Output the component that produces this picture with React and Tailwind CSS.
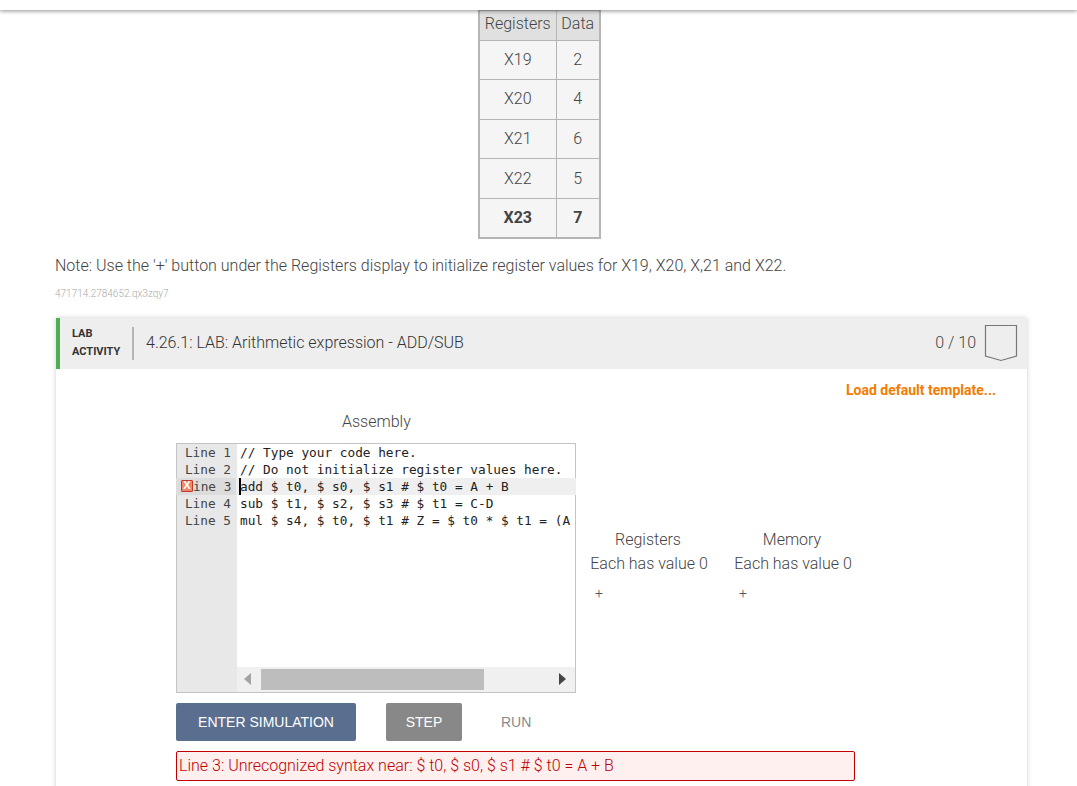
import { useState } from "react";

const registers = [
  { name: "X19", value: "2" },
  { name: "X20", value: "4" },
  { name: "X21", value: "6" },
  { name: "X22", value: "5" },
  { name: "X23", value: "7", bold: true },
];

const lines = [
  "// Type your code here.",
  "// Do not initialize register values here.",
  "add $ t0, $ s0, $ s1 # $ t0 = A + B",
  "sub $ t1, $ s2, $ s3 # $ t1 = C-D",
  "mul $ s4, $ t0, $ t1 # Z = $ t0 * $ t1 = (A",
];

function RegisterTable() {
  return (
    <table className="mx-auto border-collapse border-2 border-[#b5b5b5] text-[16px] font-light text-[#444]">
      <thead>
        <tr className="h-[30px] bg-[#e0e0e0]">
          <th className="w-[77px] border border-[#b5b5b5] pb-[2px] font-light">Registers</th>
          <th className="w-[44px] border border-[#b5b5b5] pb-[2px] font-light">Data</th>
        </tr>
      </thead>
      <tbody>
        {registers.map((r) => (
          <tr key={r.name} className="h-[39.6px] bg-[#f5f5f5]">
            <td className={`border border-[#b5b5b5] text-center ${r.bold ? "font-bold" : ""}`}>{r.name}</td>
            <td className={`border border-[#b5b5b5] text-center ${r.bold ? "font-bold" : ""}`}>{r.value}</td>
          </tr>
        ))}
      </tbody>
    </table>
  );
}

function Editor() {
  return (
    <div className="flex h-[250px] w-[400px] flex-col overflow-hidden border border-[#c4c4c4] bg-white">
      <div className="flex min-h-0 flex-1">
        <div className="w-[60px] shrink-0 bg-[#e8e8e8]" />
        <div className="min-w-0 flex-1" />
      </div>
      <div className="flex h-[25px] bg-[#f0f0f0]">
        <div className="w-[60px] shrink-0 bg-[#e8e8e8]" />
        <div className="flex flex-1 items-center">
          <span className="ml-[7px] h-0 w-0 border-y-[6px] border-r-[7px] border-y-transparent border-r-[#a3a3a3]" />
          <div className="ml-[10px] h-[21px] w-[223px] bg-[#bdbdbd]" />
          <span className="ml-[75px] h-0 w-0 border-y-[6px] border-l-[7px] border-y-transparent border-l-[#444]" />
        </div>
      </div>
    </div>
  );
}

function CodeLines() {
  return (
    <div className="absolute left-0 right-0 top-[1px] font-['DejaVu_Sans_Mono',monospace] text-[12.76px] leading-[17px] text-[#222]">
      {lines.map((line, i) => (
        <div key={i} className={`flex h-[17px] whitespace-pre ${i === 2 ? "bg-[#efefef]" : ""}`}>
          <div className={`relative w-[60px] shrink-0 pr-[5px] text-right text-[#444] ${i === 2 ? "bg-[#dcdcdc]" : ""}`}>
            {i === 2 ? <span className="pl-[17px]">{"ine 3"}</span> : "Line " + (i + 1)}
            {i === 2 && (
              <span className="absolute left-[5px] top-[2px] flex h-[12px] w-[12px] items-center justify-center rounded-[1px] border border-[#c0392b] bg-[#ee8a6a] font-['Liberation_Sans',sans-serif] text-[11px] font-bold leading-none text-white">
                X
              </span>
            )}
          </div>
          <div className="relative w-[338px] overflow-hidden pl-[4px]">
            {line}
            {i === 2 && <span className="absolute left-[3px] top-0 h-[17px] w-[2px] bg-black" />}
          </div>
        </div>
      ))}
    </div>
  );
}

function Storage({ title, className }) {
  return (
    <div className={`w-[118px] text-center text-[16px] font-light leading-[24px] text-[#444] ${className}`}>
      <div className="pr-[2px]">{title}</div>
      <div className="whitespace-nowrap">Each has value 0</div>
      <div className="mt-[5px] pl-[5px] text-left text-[14px] text-[#555]">+</div>
    </div>
  );
}

export default function App() {
  const [score] = useState("0 / 10");

  return (
    <div className="relative h-[786px] overflow-hidden bg-white font-['Roboto',sans-serif]">
      <div className="absolute inset-x-0 top-0 z-10 h-[10px] bg-white shadow-[0_1px_4px_rgba(0,0,0,0.45)]" />

      <div className="pl-[2px] pt-[9px]">
        <RegisterTable />
      </div>

      <p className="ml-[55px] mt-[15px] text-[16px] font-light leading-[24px] text-[#444]">
        Note: Use the '+' button under the Registers display to initialize register values for X19, X20, X,21 and X22.
      </p>
      <p className="ml-[55px] mt-[10px] text-[10px] font-light leading-[12px] text-[#aaa]">471714.2784652.qx3zqy7</p>

      {/* Lab activity */}
      <div className="ml-[56px] mt-[18px] w-[971px] bg-white shadow-[0_0_5px_rgba(0,0,0,0.2)]">
        <div className="flex h-[51px] items-center border-l-4 border-[#4caf50] bg-[#eeeeee]">
          <div className="ml-[12px] w-[58px] text-[11px] font-bold leading-[18px] text-[#333]">
            <div>LAB</div>
            <div>ACTIVITY</div>
          </div>
          <div className="ml-[2px] h-[33px] w-[2px] bg-[#b5b5b5]" />
          <div className="ml-[12px] text-[16px] font-light text-[#333]">4.26.1: LAB: Arithmetic expression - ADD/SUB</div>
          <div className="ml-auto text-[16px] font-light text-[#444]">{score}</div>
          <svg width="34" height="38" viewBox="0 0 34 38" className="ml-[8px] mr-[9px]">
            <path d="M1.5 1.5H32.5V32L17 36.5L1.5 32Z" fill="none" stroke="#777" strokeWidth="1.2" />
          </svg>
        </div>

        <div className="pb-[40px]">
          <div className="mr-[31px] mt-[12px] text-right text-[14px] font-bold leading-[18px] text-[#f57c00]">
            Load default template...
          </div>
          <div className="ml-[286px] mt-[11px] text-[16px] font-light leading-[24px] text-[#444]">Assembly</div>

          <div className="ml-[120px] mt-[9px] flex">
            <div className="relative">
              <Editor />
              <CodeLines />
            </div>
            <div className="ml-[14px] flex pt-[85px]">
              <Storage title="Registers" />
              <Storage title="Memory" className="ml-[26px]" />
            </div>
          </div>

          <div className="ml-[120px] mt-[10px] flex items-center font-['Liberation_Sans',sans-serif] text-[14px]">
            <button className="h-[38px] w-[180px] rounded-[2px] bg-[#5a6f8f] pt-[1px] text-white">ENTER SIMULATION</button>
            <button className="ml-[30px] h-[38px] w-[76px] rounded-[2px] bg-[#888888] pt-[1px] text-white">STEP</button>
            <button className="ml-[39px] pt-[1px] text-[#8a8a8a]">RUN</button>
          </div>

          <div className="ml-[120px] mt-[10px] h-[30px] w-[679px] rounded-[2px] border border-[#c00000] bg-[#fff0f0] pl-[2px] text-[16px] font-light leading-[28px] text-[#c00000]">
            Line 3: Unrecognized syntax near: $ t0, $ s0, $ s1 # $ t0 = A + B
          </div>
        </div>
      </div>
    </div>
  );
}
